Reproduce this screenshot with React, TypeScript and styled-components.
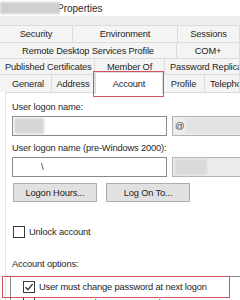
import React from 'react';
import styled, { createGlobalStyle } from 'styled-components';

const GlobalStyle = createGlobalStyle`
  body {
    margin: 0;
    background: #ffffff;
    font-family: "Liberation Sans", Arial, sans-serif;
    color: #1e1e1e;
  }
`

const Window = styled.div`
  width: 240px;
  height: 300px;
  overflow: hidden;
  background: #ffffff;
  font-size: 9.3px;
  letter-spacing: -0.15px;
`

const TitleBar = styled.div`
  height: 16px;
  display: flex;
  align-items: center;
  font-size: 10px;
  letter-spacing: 0;
  color: #2a2a2a;
`

const Blur = styled.span<{ $w: number; $h: number; $tone?: string }>`
  display: inline-block;
  width: ${p => p.$w}px;
  height: ${p => p.$h}px;
  background: ${p => p.$tone || '#d6d6d6'};
  filter: blur(1.2px);
  flex-shrink: 0;
`

const TitleText = styled.span`
  margin-left: -3px;
`

const Band = styled.div`
  height: 9px;
  background: #efefef;
`

const Tabs = styled.div`
  background: #f4f4f4;
`

const TabRow = styled.div<{ $h: number; $indent?: number }>`
  display: flex;
  height: ${p => p.$h}px;
  padding-left: ${p => p.$indent || 0}px;
  border-top: 1px solid #dcdcdc;
`

const Tab = styled.div<{ $w?: number }>`
  ${p => (p.$w ? `width: ${p.$w}px;` : 'flex: 1;')}
  flex-shrink: 0;
  display: flex;
  align-items: center;
  justify-content: center;
  white-space: nowrap;
  overflow: hidden;
  border-right: 1px solid #dcdcdc;
  box-sizing: border-box;
`

const LeftTab = styled(Tab)`
  justify-content: flex-start;
  padding-left: 5px;
`

const ActiveTab = styled.div`
  width: 68px;
  flex-shrink: 0;
  position: relative;
  margin-top: -3px;
  height: 22px;
  background: #ffffff;
  border: 1px solid #dcdcdc;
  border-bottom: none;
  box-sizing: border-box;
  display: flex;
  align-items: center;
  justify-content: center;
  z-index: 1;
`

const Highlight = styled.div`
  position: absolute;
  left: -3px;
  top: -2px;
  right: -2px;
  bottom: -3px;
  border: 1px solid #d2545e;
  pointer-events: none;
`

const Panel = styled.div`
  background: #ffffff;
  border-top: 1px solid #dcdcdc;
  margin-left: 5px;
  border-left: 1px solid #e4e4e4;
  padding: 8px 0 0 6px;
  height: 220px;
`

const Label = styled.div`
  height: 13px;
  line-height: 13px;
  color: #262626;
`

const FieldRow = styled.div`
  display: flex;
  gap: 5px;
  margin: 2px 0 6px;
`

const Input = styled.div`
  width: 155px;
  height: 20px;
  box-sizing: border-box;
  border: 1px solid #8a8a8a;
  background: #ffffff;
  display: flex;
  align-items: center;
  padding-left: 1px;
  flex-shrink: 0;
`

const Domain = styled.div`
  flex: 1;
  height: 20px;
  box-sizing: border-box;
  border: 1px solid #b4b4b4;
  border-right: none;
  background: #ececec;
  display: flex;
  align-items: center;
  padding-left: 2px;
  gap: 2px;
  color: #444;
  overflow: hidden;
`

const Slash = styled.span`
  margin-left: 27px;
  color: #333;
`

const Buttons = styled.div`
  display: flex;
  gap: 9px;
  margin-top: 6px;
  padding-left: 1px;
`

const Button = styled.div`
  width: 84px;
  height: 19px;
  box-sizing: border-box;
  border: 1px solid #adadad;
  background: #e1e1e1;
  display: flex;
  align-items: center;
  justify-content: center;
  color: #222;
`

const CheckRow = styled.div<{ $indent?: number }>`
  display: flex;
  align-items: center;
  gap: 4px;
  height: 16px;
  padding-left: ${p => p.$indent || 1}px;
  white-space: nowrap;
`

const Box = styled.span`
  width: 12px;
  height: 12px;
  box-sizing: border-box;
  border: 1px solid #3a3a3a;
  background: #ffffff;
  display: inline-flex;
  align-items: center;
  justify-content: center;
  flex-shrink: 0;
`

const Unlock = styled(CheckRow)`
  margin-top: 22px;
`

const OptionsLabel = styled(Label)`
  margin-top: 18px;
`

const OptionList = styled.div`
  margin-top: 5px;
  margin-left: -2px;
  border-left: 1px solid #8a8a8a;
  border-top: 1px solid #8a8a8a;
  position: relative;
  padding-top: 2px;
`

const OptionHighlight = styled.div`
  position: absolute;
  left: -9px;
  top: -1px;
  width: 226px;
  height: 20px;
  border: 1px solid #d2545e;
  pointer-events: none;
`

const Check = () => (
  <svg width="10" height="10" viewBox="0 0 10 10">
    <path d="M1.5 5.2 L4 7.6 L8.6 2.2" fill="none" stroke="#222" strokeWidth="1.3" />
  </svg>
)

export default function App() {
  return (
    <>
      <GlobalStyle />
      <Window>
        <TitleBar>
          <Blur $w={60} $h={12} $tone="#cfcfcf" />
          <TitleText>Properties</TitleText>
        </TitleBar>
        <Band />
        <Tabs>
          <TabRow $h={16}>
            <Tab $w={73}>Security</Tab>
            <Tab $w={105}>Environment</Tab>
            <Tab>Sessions</Tab>
          </TabRow>
          <TabRow $h={15}>
            <Tab $w={177}>Remote Desktop Services Profile</Tab>
            <Tab>COM+</Tab>
          </TabRow>
          <TabRow $h={15}>
            <LeftTab $w={95}>Published Certificates</LeftTab>
            <Tab $w={70}>Member Of</Tab>
            <LeftTab>Password Replication</LeftTab>
          </TabRow>
          <TabRow $h={17} $indent={5}>
            <Tab $w={47}>General</Tab>
            <Tab $w={43}>Address</Tab>
            <ActiveTab>
              Account
              <Highlight />
            </ActiveTab>
            <Tab $w={42}>Profile</Tab>
            <LeftTab>Telephones</LeftTab>
          </TabRow>
        </Tabs>
        <Panel>
          <Label>User logon name:</Label>
          <FieldRow>
            <Input>
              <Blur $w={30} $h={16} />
            </Input>
            <Domain>
              @
              <Blur $w={60} $h={16} $tone="#e2e2e2" />
            </Domain>
          </FieldRow>
          <Label>User logon name (pre-Windows 2000):</Label>
          <FieldRow>
            <Input>
              <Slash>\</Slash>
            </Input>
            <Domain>
              <Blur $w={32} $h={16} $tone="#dadada" />
            </Domain>
          </FieldRow>
          <Buttons>
            <Button>Logon Hours...</Button>
            <Button>Log On To...</Button>
          </Buttons>
          <Unlock>
            <Box />
            Unlock account
          </Unlock>
          <OptionsLabel>Account options:</OptionsLabel>
          <OptionList>
            <OptionHighlight />
            <CheckRow $indent={12}>
              <Box>
                <Check />
              </Box>
              User must change password at next logon
            </CheckRow>
            <CheckRow $indent={12}>
              <Box />
              User cannot change password
            </CheckRow>
          </OptionList>
        </Panel>
      </Window>
    </>
  );
}
